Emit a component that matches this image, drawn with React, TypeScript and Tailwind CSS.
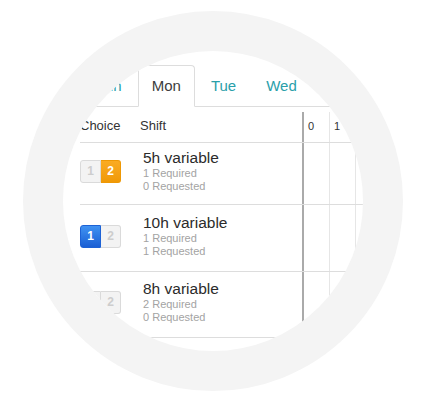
import React from 'react';

const hours = [0, 1, 2];
const days = ['Sun', 'Mon', 'Tue', 'Wed', 'Thu'];

const shifts = [
  { name: '5h variable', required: 1, requested: 0, choice: 2, pad: 'pt-[6px] pb-[11px]' },
  { name: '10h variable', required: 1, requested: 1, choice: 1, pad: 'pt-[9px] pb-[13px]' },
  { name: '8h variable', required: 2, requested: 0, choice: 0, pad: 'pt-[8px] pb-[13px]' },
];

const ChoiceButtons = ({ choice }: { choice: number }) => {
  const style = (n: number) => {
    if (choice !== n) return 'bg-[#f3f3f3] border-[#dadada] text-[#cdcdcd]';
    return n === 1
      ? 'bg-linear-to-b from-[#4092f2] to-[#1b5fd4] border-[#1d62d5] text-white'
      : 'bg-linear-to-b from-[#faab22] to-[#f09905] border-[#ee9805] text-white';
  };

  return (
    <div className="flex h-[23px] w-[41px] text-[12px] font-bold">
      <div className={`flex flex-1 items-center justify-center rounded-l-[3px] border ${style(1)}`}>1</div>
      <div className={`flex flex-1 items-center justify-center rounded-r-[3px] border border-l-0 ${style(2)}`}>2</div>
    </div>
  );
};

export default function App() {
  return (
    <div className="h-[406px] w-[421px] bg-white pl-[23px] pt-[11px] font-['Liberation_Sans',Arial,sans-serif]">
      <div className="h-[380px] w-[380px] overflow-hidden rounded-full border-[40px] border-[#f4f4f4]">
        <div className="w-[310px] pl-[17px] pt-[14px]">
          {/* day tabs */}
          <div className="flex border-b border-[#dddddd] pl-[1px] text-[15px]">
            {days.map((d) => (
              <div
                key={d}
                className={`-mb-px mr-[2px] flex h-[42px] shrink-0 items-center rounded-t-[4px] border px-[13px] ${
                  d === 'Mon'
                    ? 'border-[#dddddd] border-b-white bg-white text-[#3d3d3d]'
                    : 'border-transparent text-[#2aa0aa]'
                }`}
              >
                {d}
              </div>
            ))}
          </div>

          {/* header */}
          <div className="mt-[5px] flex h-[31px] border-b border-[#dddddd] text-[13px] text-[#333333]">
            <div className="flex w-[60px] shrink-0 items-center pb-[2px]">Choice</div>
            <div className="flex w-[164px] shrink-0 items-center border-r-2 border-[#aaaaaa] pb-[2px]">Shift</div>
            {hours.map((h) => (
              <div key={h} className="flex w-[26px] shrink-0 items-center border-r border-[#e6e6e6] pb-[1px] pl-[4px] text-[11px]">
                {h}
              </div>
            ))}
          </div>

          {/* shift rows */}
          {shifts.map((s) => (
            <div key={s.name} className="flex border-b border-[#dddddd]">
              <div className={`flex w-[60px] shrink-0 items-center ${s.pad}`}>
                <ChoiceButtons choice={s.choice} />
              </div>
              <div className={`w-[164px] shrink-0 border-r-2 border-[#aaaaaa] pl-[3px] ${s.pad}`}>
                <div className="text-[15.5px] leading-[18px] text-[#2b2b2b]">{s.name}</div>
                <div className="text-[11px] leading-[13px] text-[#a3a3a3]">{s.required} Required</div>
                <div className="text-[11px] leading-[13px] text-[#a3a3a3]">{s.requested} Requested</div>
              </div>
              {hours.map((h) => (
                <div key={h} className="w-[26px] shrink-0 border-r border-[#e6e6e6]" />
              ))}
            </div>
          ))}
        </div>
      </div>
    </div>
  );
}
